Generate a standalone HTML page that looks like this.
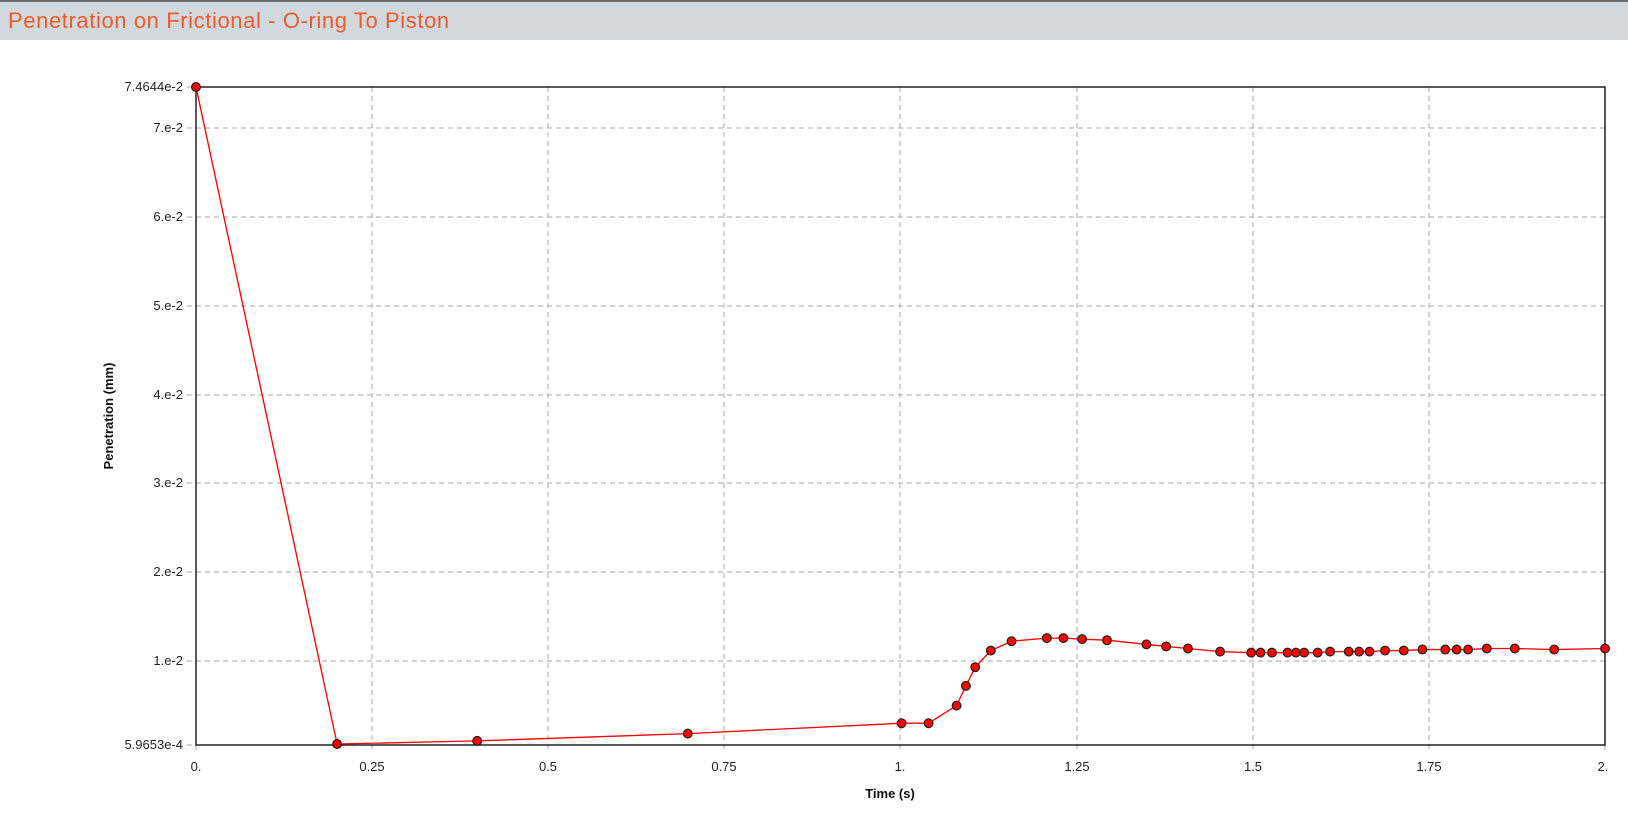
<!DOCTYPE html>
<html><head><meta charset="utf-8"><style>
html,body{margin:0;padding:0;width:1628px;height:816px;overflow:hidden;background:#fff;font-family:"Liberation Sans",sans-serif}
.bar{position:absolute;left:0;top:0;width:1628px;height:40px;background:#d1d9de;border-top:2px solid #6e6e6e;box-sizing:border-box}
.bar span{position:absolute;left:8px;top:6px;font-size:22px;letter-spacing:0.6px;color:#f05a28}
</style></head><body>
<div class="bar"><span>Penetration on Frictional - O-ring To Piston</span></div>
<svg width="1628" height="816" style="position:absolute;left:0;top:0" font-family="Liberation Sans, sans-serif">
<g stroke="#b8b8b8" stroke-dasharray="5,4" stroke-width="1.2">
<line x1="372" y1="87" x2="372" y2="753"/><line x1="548" y1="87" x2="548" y2="753"/><line x1="724" y1="87" x2="724" y2="753"/><line x1="900" y1="87" x2="900" y2="753"/><line x1="1077" y1="87" x2="1077" y2="753"/><line x1="1253" y1="87" x2="1253" y2="753"/><line x1="1429" y1="87" x2="1429" y2="753"/>
<line x1="187" y1="128" x2="1605" y2="128"/><line x1="187" y1="217" x2="1605" y2="217"/><line x1="187" y1="306" x2="1605" y2="306"/><line x1="187" y1="395" x2="1605" y2="395"/><line x1="187" y1="483" x2="1605" y2="483"/><line x1="187" y1="572" x2="1605" y2="572"/><line x1="187" y1="661" x2="1605" y2="661"/>
<line x1="187" y1="87" x2="196" y2="87"/><line x1="187" y1="745" x2="196" y2="745"/><line x1="196" y1="745" x2="196" y2="753"/><line x1="1605" y1="745" x2="1605" y2="753"/>
</g>
<rect x="196" y="87" width="1409" height="658" fill="none" stroke="#222" stroke-width="1.5"/>
<g font-size="13" fill="#222" text-anchor="end">
<text x="183" y="91">7.4644e-2</text><text x="183" y="132">7.e-2</text><text x="183" y="221">6.e-2</text><text x="183" y="310">5.e-2</text><text x="183" y="399">4.e-2</text><text x="183" y="487">3.e-2</text><text x="183" y="576">2.e-2</text><text x="183" y="665">1.e-2</text><text x="183" y="749">5.9653e-4</text>
</g>
<g font-size="13" fill="#222" text-anchor="middle">
<text x="196" y="771">0.</text><text x="372" y="771">0.25</text><text x="548" y="771">0.5</text><text x="724" y="771">0.75</text><text x="900" y="771">1.</text><text x="1077" y="771">1.25</text><text x="1253" y="771">1.5</text><text x="1429" y="771">1.75</text><text x="1603" y="771">2.</text>
</g>
<text x="890" y="798" font-size="13" font-weight="bold" text-anchor="middle" fill="#111">Time (s)</text>
<text transform="translate(113,416) rotate(-90)" font-size="13" font-weight="bold" text-anchor="middle" fill="#111">Penetration (mm)</text>
<g transform="translate(196,87) scale(1.0376,1.0379) translate(-188,-83)">
<polyline fill="none" stroke="#f00" stroke-width="1.3" points="188,83 324,716 459,713 662,706 868,696 894,696 921,679 930,660 939,642 954,626 974,617 1008,614 1024,614 1042,615 1066,616 1104,620 1123,622 1144,624 1175,627 1205,628 1214,628 1225,628 1240,628 1248,628 1256,628 1269,628 1281,627 1299,627 1309,627 1319,627 1334,626 1352,626 1370,625 1392,625 1403,625 1414,625 1432,624 1459,624 1497,625 1546,624"/>
<g fill="#f00" stroke="#222" stroke-width="1.2">
<circle cx="188" cy="83" r="4.2"/><circle cx="324" cy="716" r="4.2"/><circle cx="459" cy="713" r="4.2"/><circle cx="662" cy="706" r="4.2"/><circle cx="868" cy="696" r="4.2"/><circle cx="894" cy="696" r="4.2"/><circle cx="921" cy="679" r="4.2"/><circle cx="930" cy="660" r="4.2"/><circle cx="939" cy="642" r="4.2"/><circle cx="954" cy="626" r="4.2"/><circle cx="974" cy="617" r="4.2"/><circle cx="1008" cy="614" r="4.2"/><circle cx="1024" cy="614" r="4.2"/><circle cx="1042" cy="615" r="4.2"/><circle cx="1066" cy="616" r="4.2"/><circle cx="1104" cy="620" r="4.2"/><circle cx="1123" cy="622" r="4.2"/><circle cx="1144" cy="624" r="4.2"/><circle cx="1175" cy="627" r="4.2"/><circle cx="1205" cy="628" r="4.2"/><circle cx="1214" cy="628" r="4.2"/><circle cx="1225" cy="628" r="4.2"/><circle cx="1240" cy="628" r="4.2"/><circle cx="1248" cy="628" r="4.2"/><circle cx="1256" cy="628" r="4.2"/><circle cx="1269" cy="628" r="4.2"/><circle cx="1281" cy="627" r="4.2"/><circle cx="1299" cy="627" r="4.2"/><circle cx="1309" cy="627" r="4.2"/><circle cx="1319" cy="627" r="4.2"/><circle cx="1334" cy="626" r="4.2"/><circle cx="1352" cy="626" r="4.2"/><circle cx="1370" cy="625" r="4.2"/><circle cx="1392" cy="625" r="4.2"/><circle cx="1403" cy="625" r="4.2"/><circle cx="1414" cy="625" r="4.2"/><circle cx="1432" cy="624" r="4.2"/><circle cx="1459" cy="624" r="4.2"/><circle cx="1497" cy="625" r="4.2"/><circle cx="1546" cy="624" r="4.2"/>
</g></g>
</svg>
</body></html>
